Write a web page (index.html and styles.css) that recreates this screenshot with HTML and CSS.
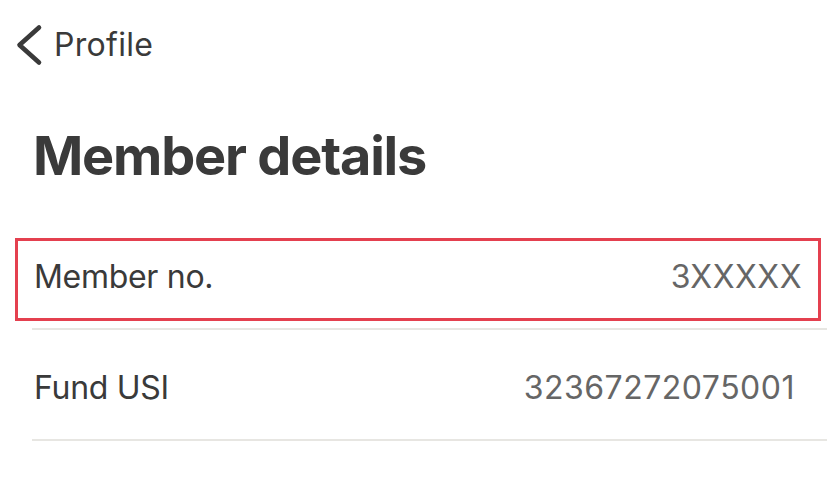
FILE: index.html
```html
<!DOCTYPE html>
<html>
<head>
<meta charset="utf-8">
<link rel="stylesheet" href="styles.css">
</head>
<body>
<div class="screen">
  <nav class="nav">
    <svg class="chev" width="32" height="44" viewBox="0 0 32 44">
      <polyline points="27,4.5 7.5,22 27,39.5" fill="none" stroke="#3a3a3a" stroke-width="4.6" stroke-linecap="round" stroke-linejoin="round"/>
    </svg>
    <span class="back">Profile</span>
  </nav>
  <h1 class="title">Member details</h1>
  <div class="list">
    <div class="row row-hl">
      <span class="label">Member no.</span>
      <span class="value">3XXXXX</span>
    </div>
    <div class="row">
      <span class="label">Fund USI</span>
      <span class="value">32367272075001</span>
    </div>
  </div>
</div>
</body>
</html>
```
FILE: styles.css
```css
html, body {
  margin: 0;
  padding: 0;
  background: #fff;
}
body {
  font-family: "Inter", "Roboto", sans-serif;
  color: #3a3a3a;
  width: 827px;
  height: 486px;
  overflow: hidden;
}
.screen {
  display: flex;
  flex-direction: column;
}
.nav {
  display: flex;
  align-items: center;
  height: 44px;
  margin-top: 23px;
  padding-left: 12px;
  gap: 10px;
}
.chev {
  display: block;
}
.back {
  font-size: 32px;
  line-height: 44px;
  color: #3a3a3a;
  letter-spacing: 0.3px;
}
.title {
  margin: 55px 0 0 33px;
  font-size: 54px;
  line-height: 68px;
  font-weight: 700;
  color: #3a3a3a;
  letter-spacing: -1.2px;
}
.list {
  margin-top: 29px;
  margin-left: 32px;
  display: flex;
  flex-direction: column;
}
.row {
  position: relative;
  display: flex;
  justify-content: space-between;
  align-items: flex-start;
  border-bottom: 2px solid #e7e6e2;
  padding: 36px 32px 0 2px;
  box-sizing: border-box;
  height: 111px;
}
.row-hl {
  padding-right: 25px;
}
.row-hl::before {
  content: "";
  position: absolute;
  left: -17px;
  right: 6px;
  top: 19px;
  bottom: 7px;
  border: 3px solid #e4404f;
}
.label {
  font-size: 32px;
  line-height: 44px;
  color: #3a3a3a;
  letter-spacing: -0.3px;
}
.value {
  font-size: 32px;
  line-height: 44px;
  color: #666;
  letter-spacing: 0.5px;
}
```
